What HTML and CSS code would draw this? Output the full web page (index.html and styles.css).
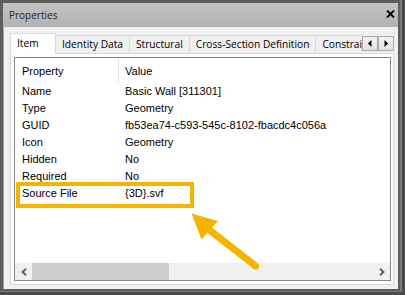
FILE: index.html
```html
<!DOCTYPE html>
<html>
<head>
<meta charset="utf-8">
<title>Properties</title>
<link rel="stylesheet" href="styles.css">
</head>
<body>
<div class="shell">
  <div class="window">
    <div class="titlebar">
      <span class="title">Properties</span>
      <svg class="close" width="9" height="8" viewBox="0 0 9 8"><path d="M1 0.5 L8 7.5 M8 0.5 L1 7.5" stroke="#000" stroke-width="1.8" fill="none"/></svg>
    </div>
    <div class="body">
      <div class="tabstrip">
        <div class="tabs">
          <div class="tab tab--active">Item</div>
          <div class="tab">Identity Data</div>
          <div class="tab">Structural</div>
          <div class="tab">Cross-Section Definition</div>
          <div class="tab">Constraints</div>
        </div>
        <div class="tabscroll">
          <div class="tsb"><svg width="4" height="7" viewBox="0 0 4 7"><path d="M3.5 0 L0 3.5 L3.5 7 Z" fill="#000"/></svg></div>
          <div class="tsb"><svg width="4" height="7" viewBox="0 0 4 7"><path d="M0.5 0 L4 3.5 L0.5 7 Z" fill="#000"/></svg></div>
        </div>
      </div>
      <div class="page">
        <div class="list">
          <div class="list-head">
            <div class="hcell hcell--name">Property</div>
            <div class="hcell hcell--value">Value</div>
          </div>
          <div class="row"><div class="cell">Name</div><div class="cell cell--value">Basic Wall [311301]</div></div>
          <div class="row"><div class="cell">Type</div><div class="cell cell--value">Geometry</div></div>
          <div class="row"><div class="cell">GUID</div><div class="cell cell--value">fb53ea74-c593-545c-8102-fbacdc4c056a</div></div>
          <div class="row"><div class="cell">Icon</div><div class="cell cell--value">Geometry</div></div>
          <div class="row"><div class="cell">Hidden</div><div class="cell cell--value">No</div></div>
          <div class="row"><div class="cell">Required</div><div class="cell cell--value">No</div></div>
          <div class="row row--marked"><div class="cell">Source File</div><div class="cell cell--value">{3D}.svf</div><div class="mark"></div></div>
          <div class="filler"></div>
          <div class="hscroll">
            <div class="hs-btn"><svg width="6" height="8" viewBox="0 0 6 8"><path d="M5 0.8 L1.6 4 L5 7.2" stroke="#606060" stroke-width="2" fill="none"/></svg></div>
            <div class="hs-thumb"></div>
            <div class="hs-track"></div>
            <div class="hs-btn"><svg width="6" height="8" viewBox="0 0 6 8"><path d="M1 0.8 L4.4 4 L1 7.2" stroke="#606060" stroke-width="2" fill="none"/></svg></div>
          </div>
        </div>
      </div>
    </div>
  </div>
  <svg class="arrow" width="405" height="295" viewBox="0 0 405 295">
    <line x1="207" y1="228" x2="255.5" y2="266" stroke="#f5b400" stroke-width="7" stroke-linecap="round"/>
    <polygon points="191.5,213.5 218,221 201.5,239.5" fill="#f5b400"/>
  </svg>
</div>
</body>
</html>
```

FILE: styles.css
```css
* {
  box-sizing: border-box;
  margin: 0;
  padding: 0;
}

html, body {
  width: 405px;
  height: 295px;
  overflow: hidden;
  background: #4b4b4b;
}

body {
  font-family: "Liberation Sans", Arial, sans-serif;
  font-size: 11px;
  color: #000;
}

.shell {
  position: relative;
  width: 405px;
  height: 295px;
  background: #7a7a7a;
  border-right: 3px solid #4b4b4b;
  border-bottom: 3px solid #4b4b4b;
  padding: 0 2px 1px 0;
}

.window {
  height: 100%;
  display: flex;
  flex-direction: column;
  border: 3px solid #5e5e5e;
  border-right-width: 2px;
  border-bottom-width: 2px;
}

.titlebar {
  height: 24px;
  flex: none;
  display: flex;
  align-items: center;
  justify-content: space-between;
  padding: 0 3px 0 6px;
  background: linear-gradient(#c4c4c4, #b1b1b1);
  font-family: "Open Sans", sans-serif;
  font-size: 10px;
  color: #1e1e1e;
}

.close {
  align-self: flex-start;
  margin-top: 7px;
}

.body {
  flex: 1;
  display: flex;
  flex-direction: column;
  background: #f0f0f0;
  border-left: 1px solid #a3a3a3;
  padding: 6px 4px 4px 6px;
}

.tabstrip {
  height: 20px;
  flex: none;
  display: flex;
  align-items: flex-start;
}

.tabs {
  flex: 1;
  min-width: 0;
  height: 21px;
  margin-bottom: -1px;
  display: flex;
  align-items: flex-end;
  overflow: hidden;
  position: relative;
  z-index: 1;
}

.tab {
  flex: none;
  height: 18px;
  margin-bottom: 1px;
  margin-left: -1px;
  padding: 0 6px;
  border: 1px solid #d9d9d9;
  border-bottom: none;
  background: #f0f0f0;
  font-family: "Open Sans", sans-serif;
  font-size: 10.2px;
  line-height: 17px;
  white-space: nowrap;
}

.tab--active {
  width: 46px;
  height: 21px;
  margin-bottom: 0;
  margin-left: 0;
  background: #fff;
  line-height: 18px;
  position: relative;
  z-index: 2;
}

.tabscroll {
  flex: none;
  display: flex;
  margin-top: 3px;
}

.tsb {
  width: 16px;
  height: 15px;
  border: 1px solid #a8a8a8;
  background: linear-gradient(#f3f3f3, #e3e3e3);
  display: flex;
  align-items: center;
  justify-content: center;
}

.page {
  flex: 1;
  display: flex;
  background: #fff;
  border: 1px solid #d9d9d9;
  padding: 3px 2px 3px 3px;
}

.list {
  flex: 1;
  display: flex;
  flex-direction: column;
  border: 1px solid #828790;
  background: #fff;
  min-width: 0;
}

.list-head {
  flex: none;
  height: 25px;
  display: grid;
  grid-template-columns: 104px 1fr;
}

.hcell {
  padding: 1px 0 0 7px;
  line-height: 24px;
}

.hcell--name {
  border-right: 1px solid #e5e5e5;
}

.hcell--value {
  padding-left: 6px;
}

.row {
  flex: none;
  height: 17px;
  display: grid;
  grid-template-columns: 104px 1fr;
  line-height: 17px;
}

.cell {
  padding-left: 7px;
  white-space: nowrap;
  overflow: hidden;
}

.cell--value {
  padding-left: 6px;
}

.row--marked {
  position: relative;
}

.mark {
  position: absolute;
  left: 1px;
  top: -3px;
  width: 178px;
  height: 26px;
  border: 4px solid #f5b400;
}

.filler {
  flex: 1;
}

.hscroll {
  flex: none;
  height: 17px;
  display: flex;
  background: #f0f0f0;
}

.hs-btn {
  flex: none;
  width: 17px;
  display: flex;
  align-items: center;
  justify-content: center;
}

.hs-thumb {
  flex: none;
  width: 137px;
  background: #cdcdcd;
}

.hs-track {
  flex: 1;
}

.arrow {
  position: absolute;
  left: 0;
  top: 0;
  pointer-events: none;
}
```
